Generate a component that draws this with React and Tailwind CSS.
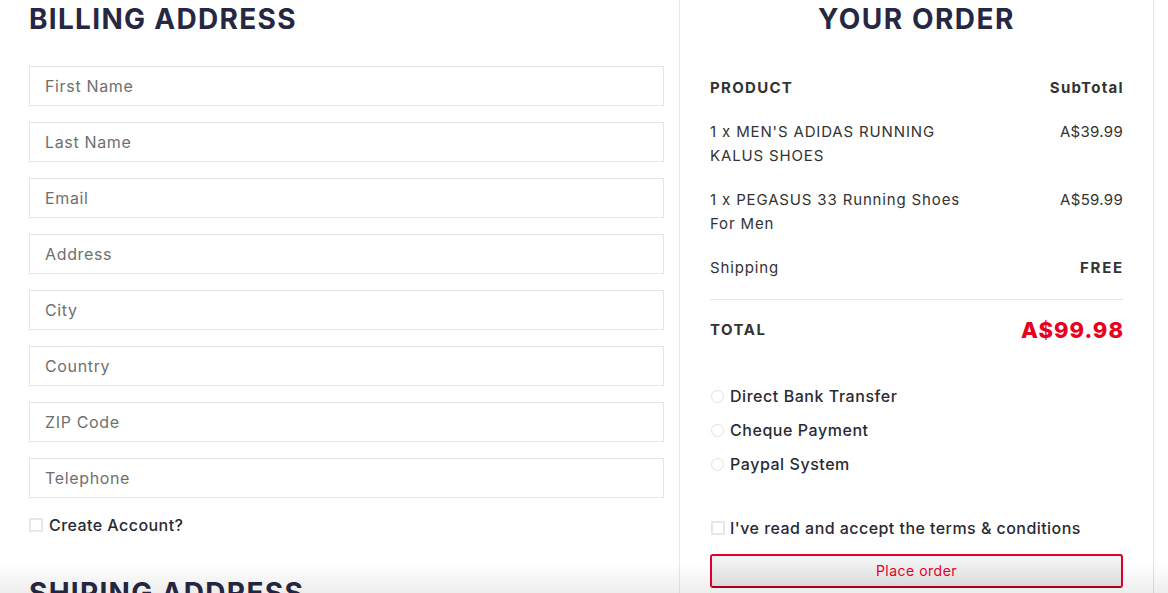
import React from "react";

const font = { fontFamily: "Inter, 'Open Sans', sans-serif" };

const fields = ["First Name", "Last Name", "Email", "Address", "City", "Country", "ZIP Code", "Telephone"];

function Radio({ label }) {
  return (
    <div className="flex items-center h-[34px]">
      <span className="w-[13px] h-[13px] rounded-full border border-[#dde2ea] bg-white ml-[1px] mr-[6px]" />
      <span className="text-[16px] font-medium text-[#2a2a33] tracking-[0.55px]">{label}</span>
    </div>
  );
}

export default function App() {
  return (
    <div style={font} className="relative w-[1168px] h-[593px] overflow-hidden bg-white flex text-[#333]">
      {/* Left column */}
      <div className="w-[680px] shrink-0 border-r border-[#e8e8e8] pl-[29px] pr-[15px]">
        <h2 className="text-[28px] leading-[36px] font-bold text-[#262843] tracking-[1.3px] mt-[1px]">BILLING ADDRESS</h2>
        <div className="mt-[29px] flex flex-col gap-[16px]">
          {fields.map((f) => (
            <div key={f} className="h-[40px] border border-[#e1e6ed] flex items-center pl-[15px] text-[16px] text-[#6f6f6f] tracking-[0.65px]">
              {f}
            </div>
          ))}
        </div>
        <div className="flex items-center mt-[19px] h-[16px]">
          <span className="w-[14px] h-[14px] border-2 border-[#e3e7ee] mr-[6px]" />
          <span className="text-[16px] font-medium text-[#2a2a33] tracking-[0.45px]">Create Account?</span>
        </div>
        <h2 className="mt-[42px] text-[28px] leading-[36px] font-bold text-[#262843] tracking-[1.3px]">SHIPING ADDRESS</h2>
      </div>

      {/* Right column */}
      <div className="w-[474px] shrink-0 border-r border-[#e2e2ea] px-[30px]">
        <h2 className="text-center text-[28px] leading-[36px] font-bold text-[#262843] tracking-[1.5px] mt-[1px]">YOUR ORDER</h2>
        <div className="mt-[39px] text-[15px] text-[#333]">
          <div className="flex justify-between font-bold h-[24px] items-center tracking-[1.3px]">
            <span>PRODUCT</span>
            <span className="-mr-[1px]">SubTotal</span>
          </div>
          <div className="flex justify-between mt-[20px] leading-[24px] tracking-[0.85px]">
            <span>1 x MEN'S ADIDAS RUNNING<br />KALUS SHOES</span>
            <span className="tracking-[0.3px]">A$39.99</span>
          </div>
          <div className="flex justify-between mt-[20px] leading-[24px] tracking-[0.85px]">
            <span>1 x PEGASUS 33 Running Shoes<br />For Men</span>
            <span className="tracking-[0.3px]">A$59.99</span>
          </div>
          <div className="flex justify-between mt-[20px] leading-[24px] tracking-[0.85px]">
            <span>Shipping</span>
            <span className="font-bold tracking-[1.8px] -mr-[1px]">FREE</span>
          </div>
          <div className="border-t border-[#e6e6e6] mt-[19px]" />
          <div className="flex justify-between items-center mt-[15px] h-[30px]">
            <span className="font-bold tracking-[1.5px]">TOTAL</span>
            <span className="font-extrabold text-[22px] text-[#e8001c] tracking-[1px] -mr-[1px]">A$99.98</span>
          </div>
        </div>
        <div className="mt-[34px] flex flex-col">
          <Radio label="Direct Bank Transfer" />
          <Radio label="Cheque Payment" />
          <Radio label="Paypal System" />
        </div>
        <div className="flex items-center mt-[37px] h-[20px]">
          <span className="w-[14px] h-[14px] border-2 border-[#e3e7ee] ml-[1px] mr-[5px]" />
          <span className="text-[16px] font-medium text-[#2a2a33] tracking-[0.45px]">I've read and accept the terms &amp; conditions</span>
        </div>
        <button className="mt-[16px] w-full h-[34px] pb-[2px] rounded-[3px] border-2 border-[#e4002b] border-b-[#b0001f] bg-gradient-to-b from-[#f4f4f4] to-[#e6e6e6] text-[14px] text-[#e4002b] tracking-[0.5px]">
          Place order
        </button>
      </div>

      {/* bottom fade */}
      <div className="pointer-events-none absolute left-0 right-0 bottom-0 h-[30px] bg-gradient-to-b from-transparent to-black/[0.07]" />
    </div>
  );
}
